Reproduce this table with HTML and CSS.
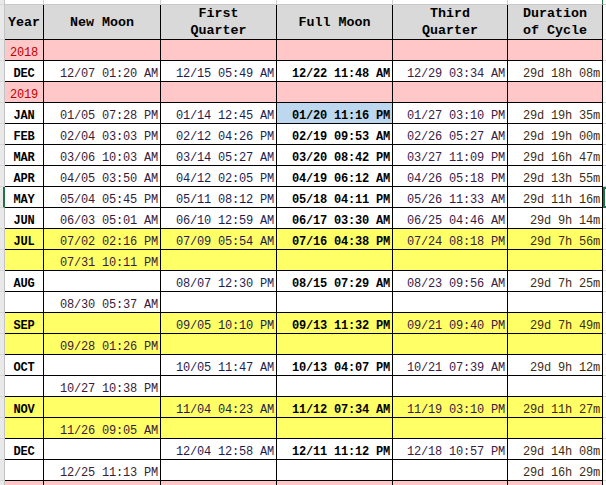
FILE: index.html
```html
<!DOCTYPE html>
<html>
<head>
<meta charset="utf-8">
<link rel="stylesheet" href="styles.css">
</head>
<body>
<div class="sheet">
  <div class="row top"><div class="s"></div><div class="c"></div><div class="c"></div><div class="c"></div><div class="c"></div><div class="c"></div><div class="c du-top"></div><div class="x"></div></div>
  <div class="row hd"><div class="s"></div><div class="c"><span>Year</span></div><div class="c"><span>New Moon</span></div><div class="c"><span>First<br>Quarter</span></div><div class="c"><span>Full Moon</span></div><div class="c"><span>Third<br>Quarter</span></div><div class="c"><span>Duration<br>of Cycle</span></div><div class="x"></div></div>

  <div class="row pink"><div class="s"></div><div class="c y yr"><span>2018</span></div><div class="c"></div><div class="c"></div><div class="c"></div><div class="c"></div><div class="c"></div><div class="x"></div></div>
  <div class="row"><div class="s"></div><div class="c y"><span>DEC</span></div><div class="c nm"><span>12/07 01:20 AM</span></div><div class="c fq"><span>12/15 05:49 AM</span></div><div class="c fm"><span>12/22 11:48 AM</span></div><div class="c tq"><span>12/29 03:34 AM</span></div><div class="c du"><span>29d 18h 08m</span></div><div class="x"></div></div>
  <div class="row pink"><div class="s"></div><div class="c y yr"><span>2019</span></div><div class="c"></div><div class="c"></div><div class="c"></div><div class="c"></div><div class="c"></div><div class="x"></div></div>
  <div class="row"><div class="s"></div><div class="c y"><span>JAN</span></div><div class="c nm"><span>01/05 07:28 PM</span></div><div class="c fq"><span>01/14 12:45 AM</span></div><div class="c fm blue"><span>01/20 11:16 PM</span></div><div class="c tq"><span>01/27 03:10 PM</span></div><div class="c du"><span>29d 19h 35m</span></div><div class="x"></div></div>
  <div class="row"><div class="s"></div><div class="c y"><span>FEB</span></div><div class="c nm"><span>02/04 03:03 PM</span></div><div class="c fq"><span>02/12 04:26 PM</span></div><div class="c fm"><span>02/19 09:53 AM</span></div><div class="c tq"><span>02/26 05:27 AM</span></div><div class="c du"><span>29d 19h 00m</span></div><div class="x"></div></div>
  <div class="row"><div class="s"></div><div class="c y"><span>MAR</span></div><div class="c nm"><span>03/06 10:03 AM</span></div><div class="c fq"><span>03/14 05:27 AM</span></div><div class="c fm"><span>03/20 08:42 PM</span></div><div class="c tq"><span>03/27 11:09 PM</span></div><div class="c du"><span>29d 16h 47m</span></div><div class="x"></div></div>
  <div class="row"><div class="s"></div><div class="c y"><span>APR</span></div><div class="c nm"><span>04/05 03:50 AM</span></div><div class="c fq"><span>04/12 02:05 PM</span></div><div class="c fm"><span>04/19 06:12 AM</span></div><div class="c tq"><span>04/26 05:18 PM</span></div><div class="c du"><span>29d 13h 55m</span></div><div class="x"></div></div>
  <div class="row sel"><div class="s"></div><div class="c y"><span>MAY</span></div><div class="c nm"><span>05/04 05:45 PM</span></div><div class="c fq"><span>05/11 08:12 PM</span></div><div class="c fm"><span>05/18 04:11 PM</span></div><div class="c tq"><span>05/26 11:33 AM</span></div><div class="c du"><span>29d 11h 16m</span></div><div class="x"></div></div>
  <div class="row"><div class="s"></div><div class="c y"><span>JUN</span></div><div class="c nm"><span>06/03 05:01 AM</span></div><div class="c fq"><span>06/10 12:59 AM</span></div><div class="c fm"><span>06/17 03:30 AM</span></div><div class="c tq"><span>06/25 04:46 AM</span></div><div class="c du"><span>29d 9h 14m</span></div><div class="x"></div></div>
  <div class="row yellow"><div class="s"></div><div class="c y"><span>JUL</span></div><div class="c nm"><span>07/02 02:16 PM</span></div><div class="c fq"><span>07/09 05:54 AM</span></div><div class="c fm"><span>07/16 04:38 PM</span></div><div class="c tq"><span>07/24 08:18 PM</span></div><div class="c du"><span>29d 7h 56m</span></div><div class="x"></div></div>
  <div class="row yellow"><div class="s"></div><div class="c y"></div><div class="c nm"><span>07/31 10:11 PM</span></div><div class="c"></div><div class="c"></div><div class="c"></div><div class="c"></div><div class="x"></div></div>
  <div class="row"><div class="s"></div><div class="c y"><span>AUG</span></div><div class="c nm"></div><div class="c fq"><span>08/07 12:30 PM</span></div><div class="c fm"><span>08/15 07:29 AM</span></div><div class="c tq"><span>08/23 09:56 AM</span></div><div class="c du"><span>29d 7h 25m</span></div><div class="x"></div></div>
  <div class="row"><div class="s"></div><div class="c y"></div><div class="c nm"><span>08/30 05:37 AM</span></div><div class="c"></div><div class="c"></div><div class="c"></div><div class="c"></div><div class="x"></div></div>
  <div class="row yellow"><div class="s"></div><div class="c y"><span>SEP</span></div><div class="c nm"></div><div class="c fq"><span>09/05 10:10 PM</span></div><div class="c fm"><span>09/13 11:32 PM</span></div><div class="c tq"><span>09/21 09:40 PM</span></div><div class="c du"><span>29d 7h 49m</span></div><div class="x"></div></div>
  <div class="row yellow"><div class="s"></div><div class="c y"></div><div class="c nm"><span>09/28 01:26 PM</span></div><div class="c"></div><div class="c"></div><div class="c"></div><div class="c"></div><div class="x"></div></div>
  <div class="row"><div class="s"></div><div class="c y"><span>OCT</span></div><div class="c nm"></div><div class="c fq"><span>10/05 11:47 AM</span></div><div class="c fm"><span>10/13 04:07 PM</span></div><div class="c tq"><span>10/21 07:39 AM</span></div><div class="c du"><span>29d 9h 12m</span></div><div class="x"></div></div>
  <div class="row"><div class="s"></div><div class="c y"></div><div class="c nm"><span>10/27 10:38 PM</span></div><div class="c"></div><div class="c"></div><div class="c"></div><div class="c"></div><div class="x"></div></div>
  <div class="row yellow"><div class="s"></div><div class="c y"><span>NOV</span></div><div class="c nm"></div><div class="c fq"><span>11/04 04:23 AM</span></div><div class="c fm"><span>11/12 07:34 AM</span></div><div class="c tq"><span>11/19 03:10 PM</span></div><div class="c du"><span>29d 11h 27m</span></div><div class="x"></div></div>
  <div class="row yellow"><div class="s"></div><div class="c y"></div><div class="c nm"><span>11/26 09:05 AM</span></div><div class="c"></div><div class="c"></div><div class="c"></div><div class="c"></div><div class="x"></div></div>
  <div class="row"><div class="s"></div><div class="c y"><span>DEC</span></div><div class="c nm"></div><div class="c fq"><span>12/04 12:58 AM</span></div><div class="c fm"><span>12/11 11:12 PM</span></div><div class="c tq"><span>12/18 10:57 PM</span></div><div class="c du"><span>29d 14h 08m</span></div><div class="x"></div></div>
  <div class="row"><div class="s"></div><div class="c y"></div><div class="c nm"><span>12/25 11:13 PM</span></div><div class="c"></div><div class="c"></div><div class="c"></div><div class="c du"><span>29d 16h 29m</span></div><div class="x"></div></div>

  <div class="row pink last"><div class="s"></div><div class="c"></div><div class="c"></div><div class="c"></div><div class="c"></div><div class="c"></div><div class="c"></div><div class="x"></div></div>
</div>
</body>
</html>
```

FILE: styles.css
```css
html, body {
  margin: 0;
  padding: 0;
  background: #ffffff;
}

body {
  font-family: "Liberation Mono", "Courier New", monospace;
  color: #000;
}

.sheet {
  display: grid;
  grid-template-columns: 5px 39px 117px 116px 116px 115px 95px 1fr;
  grid-template-rows: 5px 35px repeat(21, 21px) 1fr;
  width: 606px;
  height: 485px;
  overflow: hidden;
}

.row {
  display: contents;
}

.c {
  box-sizing: border-box;
  border-right: 1px solid #000;
  border-bottom: 1px solid #000;
  background: #fff;
  font-size: 12px;
  line-height: 14px;
  letter-spacing: -0.2px;
  display: flex;
  align-items: flex-end;
  justify-content: flex-end;
  padding-right: 2px;
  white-space: nowrap;
  overflow: hidden;
}

.s {
  box-sizing: border-box;
  background: #e9e9e9;
  border-right: 1px solid #c3c3c3;
  border-bottom: 1px solid #d6d6d6;
}

.x {
  box-sizing: border-box;
  background: #fff;
  border-bottom: 1px solid #d6d6d6;
}

/* row above the table */
.top .c {
  border-right-color: #d0d0d0;
  border-bottom-color: #c8c8c8;
}
.top .du-top {
  border-right: 1px solid #217346;
}
.top .x {
  border-bottom-color: #c8c8c8;
}

/* header */
.hd .c {
  background: #d9d9d9;
  font-weight: bold;
  font-size: 13.33px;
  line-height: 17px;
  letter-spacing: 0;
  align-items: center;
  justify-content: center;
  text-align: center;
  padding: 0;
}

/* year / month column */
.y {
  justify-content: center;
  padding-right: 0;
  font-weight: bold;
  color: #000;
}
.yr {
  color: #c00000;
  font-weight: normal;
}

.nm { color: #3b1b36; }
.fq { color: #1f1d50; }
.fm { color: #000; font-weight: bold; }
.tq { color: #392049; }
.du { color: #3e2d14; }

.blue { background: #bdd7ee; }

.pink .c { background: #ffc7c7; }
.yellow .c { background: #ffff66; }

.last .c { border-bottom: 0; }
.last .s, .last .x { border-bottom: 0; }

/* selected row marker */
.sel .s {
  border-right: 2px solid #217346;
}
.sel .x {
  border-left: 2px solid #217346;
  border-top: 2px solid #217346;
  border-bottom: 2px solid #217346;
}
```
